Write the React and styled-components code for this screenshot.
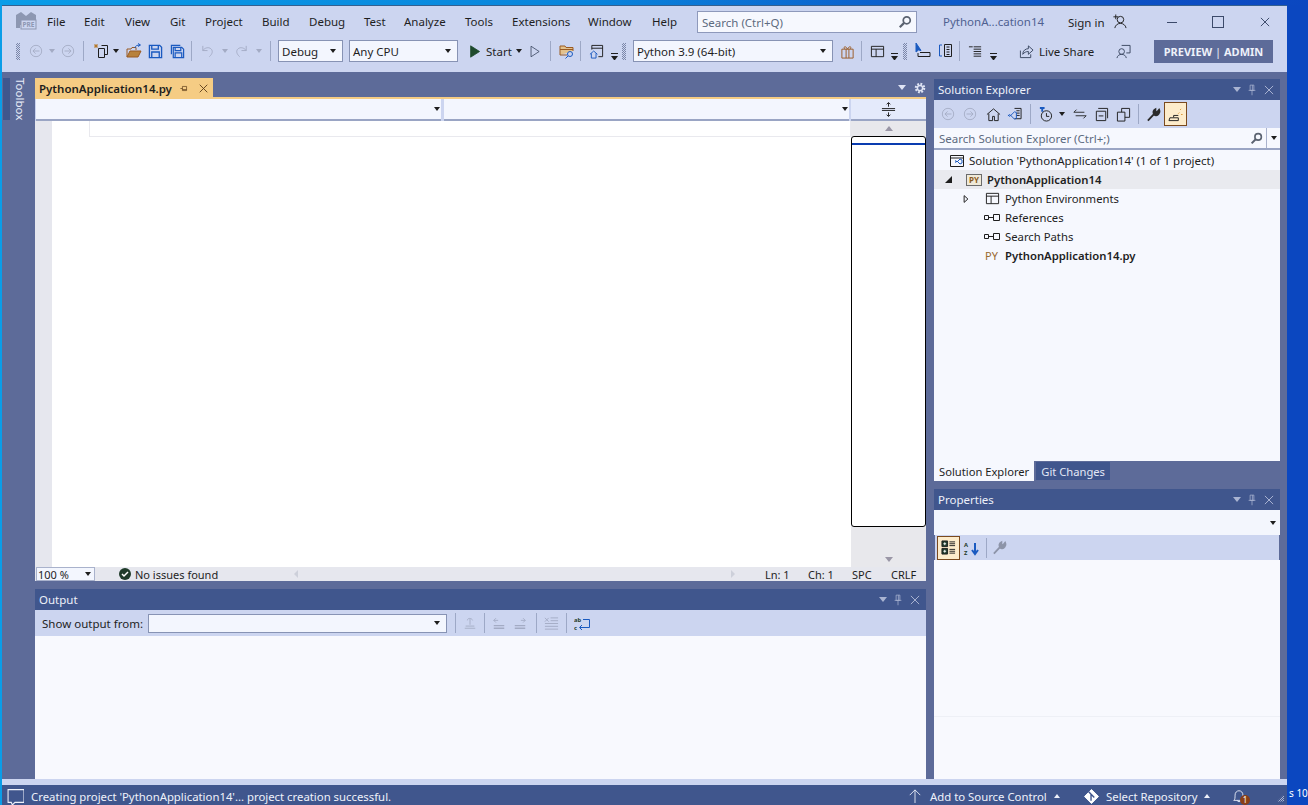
import React from "react";
import styled, { createGlobalStyle } from "styled-components";

const GlobalStyle = createGlobalStyle`
  html, body { margin: 0; padding: 0; background: #0b47c0; }
  * { box-sizing: border-box; }
  body { font-family: "Noto Sans", "Open Sans", sans-serif; font-size: 11.5px; color: #1e1e1e; }
`;

const GRAY = "#a3abc4";
const DARK = "#1e1e1e";
const BLUE = "#1a5ac0";
const BROWN = "#9a5a22";
const CHROME = "#ccd5f0";

const IconText = styled.text`
  font-family: "Noto Sans", sans-serif;
  font-size: 5.8px;
  font-weight: 700;
  fill: #1f3b2a;
  stroke: none;
`;

// 16x16 drawings, stroke colour comes from the Ico wrapper
const drawings = {
  back: <><circle cx="8" cy="8" r="6.5" /><path d="M12 8H4.5M7.5 5L4.5 8l3 3" /></>,
  forward: <><circle cx="8" cy="8" r="6.5" /><path d="M4 8h7.5M8.5 5l3 3-3 3" /></>,
  newProject: <><path d="M5.5 5.5h6v9h-6zM8.5 2.500h6v9h-3" /><path d="M3 1v4M1 3h4M1.500 1.500l3 3M4.500 1.500l-3 3" stroke="#b5792a" /></>,
  open: <><path d="M1 14V6h4l1-1.500h4V7" stroke={BROWN} /><path d="M1 14h11l3-6H4z" fill="#b8823c" stroke={BROWN} /><path d="M9 5c0-2 2-3 5-3M12 .5L14.500 2 12 3.500" stroke={BLUE} /></>,
  save: <g strokeWidth="1.400"><path d="M1.500 1.500h11l2 2v11h-13z" /><path d="M4 1.500v4h7v-4M4 14.500v-6h8v6" /></g>,
  saveAll: <g strokeWidth="1.300"><path d="M3.500 3.500h9l2 2v9h-11z" /><path d="M5.500 3.500v3.500h6V3.500M5.500 14.500V9.500h7v5M1.500 11V1.500H11" /></g>,
  undo: <path d="M3 2v5h5M3 7c2-3 6-4 8.500-2 2.500 2 2 5.500-1.500 8.500" />,
  redo: <path d="M13 2v5H8M13 7c-2-3-6-4-8.500-2C2 7 2.500 10.500 6 13.500" />,
  play: <path d="M2 1l11 7-11 7z" fill="#1e4a2c" stroke="#1e4a2c" />,
  hollow: <path d="M2.500 1.500l10 6.500-10 6.500z" />,
  folderSearch: <><path d="M1 12V3h5l1 1.500h7V8M1 12h7M1 6.500h13" stroke={BROWN} fill="#e3c28d" /><circle cx="11" cy="11" r="2.500" stroke={BLUE} /><path d="M9 13l-2.500 2.500" stroke={BLUE} /></>,
  homeWindow: <><path d="M3 1.500h11.500v12H10M3 1.500V6M3 4.500h11.500" /><path d="M1 11l4-3.500L9 11M2.500 10v5h5v-5" stroke={BLUE} /></>,
  gift: <path d="M2 5.500h12v9.500H2zM6.500 5.500V15M9.500 5.500V15M5 5.500C3.500 3 5.500 1 8 5.500 10.500 1 12.500 3 11 5.500" stroke={BROWN} />,
  layout: <path d="M1.500 2.500h13v11h-13zM1.500 5.500h13M6.500 5.500v8" />,
  select: <><path d="M1 0v9l2.500-2 2.500.5z" fill={BLUE} stroke={BLUE} /><path d="M5 9.500h10v4H3V10" /></>,
  dock: <><path d="M5 2H2.500v11H5" stroke={BLUE} /><path d="M7.500 1.500h7v12h-7zM9.500 4h3M9.500 6.500h3M9.500 9h3M9.500 11.500h3" /></>,
  indent: <path d="M1 3h4M6 3h8M6 5.500h8M6 8h8M6 10.500h8M6 13h8" />,
  share: <path d="M1.500 7v7.500h11V11M4 11c0-4 3-6 6-6V2l5 4.500L10 11V8c-2.500 0-4.500 1-6 3z" />,
  feedback: <><path d="M6 1.500h9v8H11" /><circle cx="6" cy="8" r="3" /><path d="M1 15c.5-2.500 2.500-4 5-4s4.500 1.500 5 4" /></>,
  person: <><path d="M4 .5v5M1.500 3h5" /><circle cx="9" cy="6" r="3.500" /><path d="M3 15c.5-3 3-5 6-5s5.500 2 6 5" /></>,
  magnifier: <><circle cx="10" cy="6" r="4" strokeWidth="2" /><path d="M7 9l-5 5" strokeWidth="2.500" /></>,
  home: <path d="M1 8l7-6 7 6M3 7v7.500h4V10h2v4.500h4V7" />,
  vsMap: <><path d="M8 1.500h7v11H8M10 4h3.500M10 6.500h3.500M10 9h3.500" /><path d="M1 9.500l2-1.500 5 5 2-1V6L8 5 3 10 1 8.500" stroke={BLUE} /></>,
  clock: <><circle cx="9" cy="9.500" r="5.500" /><path d="M9 6.500v3.500h3" /><path d="M2 1h5M4.500 1v4" stroke={BLUE} strokeWidth="2" /></>,
  sync: <path d="M1 6h12M4 3L1 6M3 10h12M12 13l3-3" />,
  collapse: <path d="M2.500 4.500h10v10h-10zM5 9.500h5M4.500 1.500h10V12" />,
  copies: <path d="M1.500 5.500h8v9.500h-8zM6 1.500h8.500V11H9.500M6 1.500v4" />,
  wrench: <path d="M2 14.500l7-7.500M10 2.500c-2 1-2.500 3-1.500 5s3.500 1.500 5-.5c1-1.500 1-3 .5-4L11.500 6 10 4.500z" fill="currentColor" strokeWidth="2" />,
  showAll: <><path d="M2 11.500h9v3H1zM6 11V9h5" /><path d="M12 6l-1 1M14 8h1.500M13 3l1-1" stroke="#d38a20" /></>,
  solution: <><path d="M1.500 2.500h13v11H1.500zM1.500 5h13" /><path d="M6 9.500l2-1.500 3 3 2-1V7l-2-1-3 3-2-1.500" stroke={BLUE} /></>,
  refs: <path d="M.5 5.500h4v4h-4zM4.500 7.500h5M9.500 4.500h6v6h-6z" />,
  closedArrow: <path d="M5.500 3.500l5 4.500-5 4.500z" strokeWidth="1.300" />,
  categorized: <><path d="M1 1h6v6H1zM1 9h6v6H1z" fill="#1f3b2a" /><path d="M9 2h6M9 4h6M9 6h6M9 10h6M9 12h6M9 14h6" /><path d="M2.500 4h3M4 2.500v3M2.500 12h3M4 10.500v3" stroke="#fff" /></>,
  sortAz: <><IconText x="1" y="6.500">A</IconText><IconText x="1" y="14.500">Z</IconText><path d="M12 3v11M9 10l3 4 3-4" stroke={BLUE} strokeWidth="2" /></>,
  findMsg: <><path d="M2 14h12M3 11.500h10" /><path d="M8 10V3M5 5c0-3 5-3 6 0" /></>,
  indentLeft: <><path d="M2 11h12M2 14h12" strokeWidth="1.500" /><path d="M7 5H2M4.500 2.500L2 5l2.500 2.500" /></>,
  indentRight: <><path d="M2 11h12M2 14h12" strokeWidth="1.500" /><path d="M9 5h5M11.500 2.500L14 5l-2.500 2.500" /></>,
  clearAll: <path d="M7 2h8M7 5h8M1 8h14M1 11h14M1 14h14M1 2l4 4M5 2L1 6" />,
  wrap: <><IconText x="0" y="6.500">ab</IconText><IconText x="0" y="14.500">c</IconText><path d="M9 4.500h6.500v8H6M8 10l-2.500 2.500L8 15" /></>,
  splitter: <path d="M1 7h14M1 9h14M8 5V1M6 2.500L8 .5l2 2M8 11v4M6 13.500l2 2 2-2" />,
  comment: <path d="M1 1.500h15v12H7.500L5 16l-1-2.500H1z" />,
  arrowUp: <path d="M8 16V1M2 7l6-6 6 6" />,
  git: <><path d="M8 .5L15.500 8 8 15.500.5 8z" fill="#fff" stroke="#fff" /><path d="M5 3l6 6M7.500 5.500v7" stroke="#40568d" strokeWidth="1.500" /></>,
  bell: <path d="M2 13c1.500-1 1.500-3 1.500-6 0-3 2-5 4.500-5s4.500 2 4.500 5c0 3 0 5 1.500 6zM6 13c0 2 4 2 4 0" />,
  pin: <path d="M5.500 1.500h5v7h-5zM3.500 8.500h9M8 8.500v6.500M8.500 1.500v7" />,
  pinH: <path d="M2 8h3M5 5v6h6V5zM5 9.500h6" />,
  close: <path d="M2.500 2.500l11 11M13.500 2.500l-11 11" strokeWidth="1.300" />,
  gear: <><circle cx="8" cy="8" r="5.500" strokeWidth="3" strokeDasharray="2.400 1.900" /><circle cx="8" cy="8" r="3.500" strokeWidth="2" /></>,
};

const IconSvg = styled.svg`
  flex: none;
  margin-left: ${(p) => p.$l}px;
  color: ${(p) => p.$color};
  stroke: ${(p) => p.$color};
  fill: none;
  stroke-width: 1;
`;

const Ico = ({ name, size = 16, color = DARK, l = 0 }) => (
  <IconSvg viewBox="0 0 16 16" width={size} height={size} $color={color} $l={l}>
    {drawings[name]}
  </IconSvg>
);

const Desktop = styled.div`
  width: 1308px;
  height: 805px;
  display: flex;
  flex-direction: column;
  overflow: hidden;
  background: #0b47c0;
`;
const TopStrip = styled.div`
  height: 5px;
  flex: none;
  background: linear-gradient(90deg, #0a9de8 0%, #0a85dc 45%, #0b5ccb 70%, #0b47c0 100%);
`;
const DesktopRow = styled.div`
  flex: 1;
  display: flex;
  min-height: 0;
  background: linear-gradient(90deg, #0a9de8 0, #0a9de8 2px, #0b47c0 2px);
`;
const WindowFrame = styled.div`
  width: 1285px;
  flex: none;
  margin-left: 2px;
  display: flex;
  flex-direction: column;
  background: ${CHROME};
  border-top: 1px solid #35608f;
`;
const Clock = styled.div`
  flex: 1;
  align-self: flex-end;
  color: #fff;
  font-size: 10px;
  line-height: 16px;
  margin-bottom: 4px;
  padding-left: 2px;
  white-space: nowrap;
`;

const MenuRow = styled.div`
  height: 30px;
  display: flex;
  align-items: center;
  flex: none;
  padding-left: 13px;
`;
const Logo = styled.svg`
  width: 22px;
  height: 20px;
  flex: none;
  margin-right: 10px;
`;
const LogoText = styled.text`
  font-family: "Noto Sans", sans-serif;
  font-size: 6.5px;
  font-weight: 700;
  fill: #8d97b2;
`;
const MenuList = styled.nav`
  display: flex;
  width: 650px;
`;
const MenuItem = styled.span`
  width: ${(p) => p.$w}px;
  font-size: 11.5px;
  color: #1e1e1e;
`;
const SearchBox = styled.div`
  width: 220px;
  height: 22px;
  margin-top: 2px;
  display: flex;
  align-items: center;
  justify-content: space-between;
  padding: 0 4px;
  background: #f6f8fe;
  border: 1px solid #8e99bb;
  color: #5d6b80;
`;
const WindowTitle = styled.span`
  margin-left: 26px;
  width: 125px;
  color: #4f6191;
  font-size: 11.5px;
`;
const SignIn = styled.span`
  width: 44px;
  font-size: 11.5px;
  margin-top: 2px;
`;
const WindowButtons = styled.div`
  display: flex;
  align-items: center;
  gap: 30px;
  margin-left: 37px;
  margin-top: 2px;
`;
const WinMin = styled.span`
  width: 16px;
  height: 12px;
  display: flex;
  align-items: center;
  &::before {
    content: "";
    width: 10px;
    height: 1px;
    margin-left: 3px;
    background: #3c4a6a;
  }
`;
const WinMax = styled.span`
  width: 16px;
  height: 12px;
  display: flex;
  justify-content: center;
  &::before {
    content: "";
    width: 10px;
    height: 10px;
    border: 1px solid #3c4a6a;
  }
`;

const ToolRow = styled.div`
  height: ${(p) => p.$h || 36}px;
  flex: none;
  display: flex;
  align-items: center;
  padding-bottom: ${(p) => p.$pb || 0}px;
  background: ${CHROME};
`;
const Grip = styled.span`
  width: 4px;
  height: 17px;
  flex: none;
  margin-left: ${(p) => p.$l}px;
  background: repeating-conic-gradient(#7b86a8 0 25%, transparent 0 50%) 0 0 / 2px 2px;
`;
const Sep = styled.span`
  width: 1px;
  height: 20px;
  flex: none;
  margin-left: ${(p) => p.$l}px;
  background: #9da8c6;
`;
const Caret = styled.span`
  flex: none;
  margin-left: ${(p) => p.$l || 0}px;
  width: 0;
  height: 0;
  border-left: ${(p) => p.$s || 3.5}px solid transparent;
  border-right: ${(p) => p.$s || 3.5}px solid transparent;
  border-${(p) => (p.$up ? "bottom" : "top")}: ${(p) => (p.$s ? p.$s + 0.5 : 4)}px solid ${(p) => p.$color || DARK};
`;
const Overflow = styled.span`
  flex: none;
  margin-left: ${(p) => p.$l}px;
  margin-top: 9px;
  width: 7px;
  height: 6px;
  border-top: 1px solid #1e1e1e;
  &::after {
    content: "";
    display: block;
    margin-top: 2px;
    border-left: 3.5px solid transparent;
    border-right: 3.5px solid transparent;
    border-top: 4px solid #1e1e1e;
  }
`;
const Combo = styled.div`
  flex: none;
  width: ${(p) => p.$w}px;
  height: ${(p) => p.$h || 22}px;
  margin-left: ${(p) => p.$l || 0}px;
  display: flex;
  align-items: center;
  justify-content: space-between;
  padding: 0 6px 0 3px;
  background: #f3f6fe;
  border: 1px solid #8793b4;
  font-size: 11.5px;
`;
const LabelText = styled.span`
  flex: none;
  width: ${(p) => p.$w}px;
  margin-left: ${(p) => p.$l}px;
  white-space: nowrap;
`;
const PreviewBadge = styled.div`
  margin-left: 23px;
  width: 119px;
  height: 23px;
  display: flex;
  align-items: center;
  justify-content: center;
  background: #5d6b99;
  color: #eef1fa;
  font-size: 11px;
  font-weight: 700;
  white-space: pre;
`;
const ThinBar = styled.span`
  font-weight: 400;
`;

const Workspace = styled.div`
  flex: 1;
  min-height: 0;
  display: flex;
  background: #5d6b99;
`;
const ToolboxRail = styled.div`
  width: 33px;
  flex: none;
  padding-top: 6px;
  display: flex;
  align-items: flex-start;
`;
const ToolboxTab = styled.div`
  width: 7px;
  height: 42px;
  margin-left: 1px;
  background: #40568d;
`;
const ToolboxLabel = styled.span`
  writing-mode: vertical-rl;
  margin-left: 3px;
  color: #e8ecf8;
  font-size: 11.5px;
  line-height: 14px;
`;
const CenterColumn = styled.div`
  width: 891px;
  flex: none;
  padding-top: 6px;
  display: flex;
  flex-direction: column;
`;
const TabStrip = styled.div`
  height: 19px;
  flex: none;
  display: flex;
  align-items: center;
`;
const DocTab = styled.div`
  width: 178px;
  height: 19px;
  display: flex;
  align-items: center;
  padding: 1px 0 0 4px;
  background: #f5cc84;
  font-weight: 600;
  font-size: 11.5px;
`;
const DocName = styled.span`
  width: 140px;
  white-space: nowrap;
`;
const TabActions = styled.div`
  margin-left: auto;
  display: flex;
  align-items: center;
  gap: 8px;
`;
const NavBar = styled.div`
  height: 24px;
  flex: none;
  display: flex;
  border-top: 2px solid #f5cc84;
  background: ${CHROME};
`;
const NavCombo = styled.div`
  flex: none;
  width: ${(p) => p.$w}px;
  margin-left: 1px;
  margin-right: 2px;
  display: flex;
  align-items: center;
  justify-content: flex-end;
  padding-right: 1px;
  background: #f3f6fe;
  border-bottom: 2px solid #9aa5c4;
`;
const SplitButton = styled.div`
  flex: 1;
  display: flex;
  align-items: center;
  justify-content: center;
  background: #e4eafb;
  border-bottom: 2px solid #9aa5c4;
`;
const EditorBody = styled.div`
  flex: 1;
  min-height: 0;
  display: flex;
  background: #fff;
`;
const Gutter = styled.div`
  width: 17px;
  flex: none;
  background: #e6e7ee;
`;
const TextArea = styled.div`
  flex: 1;
`;
const CurrentLine = styled.div`
  height: 16px;
  margin-left: 37px;
  border: 1px solid #e9e9ee;
  border-top: 0;
`;
const MapColumn = styled.div`
  width: 75px;
  flex: none;
  display: flex;
  flex-direction: column;
  align-items: center;
  background: #e8e8ec;
`;
const MapArrow = styled.div`
  height: ${(p) => p.$h}px;
  margin-top: ${(p) => p.$top || 0}px;
  display: flex;
  align-items: center;
`;
const MapBox = styled.div`
  width: 75px;
  height: 391px;
  flex: none;
  padding-top: 6px;
  background: #fff;
  border: 1px solid #000;
  border-radius: 3px;
  &::before {
    content: "";
    display: block;
    height: 2px;
    background: #0a3cb0;
  }
`;
const EditorStatus = styled.div`
  height: 14px;
  flex: none;
  display: flex;
  align-items: center;
  background: #e6e7ee;
  font-size: 11px;
`;
const ZoomCombo = styled.div`
  width: 59px;
  height: 14px;
  margin-left: 1px;
  flex: none;
  display: flex;
  align-items: center;
  justify-content: space-between;
  padding: 0 3px 0 1px;
  background: #f3f6fe;
  border: 1px solid #a9b2cc;
`;
const IssueDot = styled.svg`
  width: 12px;
  height: 12px;
  flex: none;
  margin-left: 24px;
`;
const SideArrow = styled.span`
  flex: none;
  margin-left: ${(p) => p.$l}px;
  width: 0;
  height: 0;
  border-top: 4px solid transparent;
  border-bottom: 4px solid transparent;
  border-${(p) => (p.$left ? "right" : "left")}: 4px solid #cdd0da;
`;
const OutputPane = styled.div`
  height: 190px;
  flex: none;
  margin-top: 8px;
  display: flex;
  flex-direction: column;
`;
const PaneTitle = styled.div`
  height: 21px;
  flex: none;
  display: flex;
  align-items: center;
  justify-content: space-between;
  padding: 0 5px 0 4px;
  background: #40568d;
  color: #eef1fa;
  font-size: 11.5px;
`;
const PaneActions = styled.div`
  display: flex;
  align-items: center;
  gap: 5px;
`;
const PaneBody = styled.div`
  flex: 1;
  min-height: 0;
  background: #f8f9fe;
`;
const RightColumn = styled.div`
  width: 346px;
  flex: none;
  margin-left: 8px;
  padding-top: 7px;
  display: flex;
  flex-direction: column;
`;
const ExplorerPane = styled.div`
  height: 402px;
  flex: none;
  display: flex;
  flex-direction: column;
`;
const SearchRow = styled.div`
  height: 22px;
  flex: none;
  display: flex;
  align-items: center;
  padding-left: 5px;
  background: #f6f8fe;
  border-bottom: 2px solid #9aa5c4;
  color: #5d6b80;
`;
const SearchGlass = styled.span`
  display: flex;
  margin-left: auto;
`;
const SearchMenu = styled.div`
  margin-left: 3px;
  width: 14px;
  height: 100%;
  display: flex;
  align-items: center;
  justify-content: center;
  border-left: 1px solid #a9b2cc;
`;
const Tree = styled.div`
  flex: 1;
  min-height: 0;
  padding-top: 1px;
  background: #f6f8fe;
`;
const TreeRow = styled.div`
  height: 19px;
  display: flex;
  align-items: center;
  padding-left: ${(p) => p.$indent}px;
  background: ${(p) => (p.$selected ? "#e9eaef" : "transparent")};
  font-size: ${(p) => p.$size || 11.3}px;
  font-weight: ${(p) => (p.$bold ? 600 : 400)};
`;
const OpenArrow = styled.span`
  width: 0;
  height: 0;
  flex: none;
  border-bottom: 7px solid #1e1e1e;
  border-left: 7px solid transparent;
`;
const PyChip = styled.span`
  width: 16px;
  height: 12px;
  flex: none;
  margin-left: ${(p) => p.$l}px;
  margin-right: 5px;
  display: flex;
  align-items: center;
  justify-content: center;
  border: 1px solid #6b6b6b;
  background: #efe9d8;
  color: #8a5a1c;
  font-size: 8px;
  font-weight: 700;
`;
const PyMark = styled.span`
  width: 20px;
  flex: none;
  color: #9a6a30;
  font-size: 11px;
  font-weight: 400;
`;
const TreeIconGap = styled.span`
  display: flex;
  flex: none;
  margin-right: ${(p) => p.$r}px;
  margin-left: ${(p) => p.$l || 0}px;
`;
const BottomTabs = styled.div`
  height: 20px;
  flex: none;
  display: flex;
  align-items: flex-start;
  gap: 2px;
`;
const BottomTab = styled.div`
  height: ${(p) => (p.$active ? 20 : 18)}px;
  margin-top: ${(p) => (p.$active ? 0 : 1)}px;
  padding: 0 5px;
  display: flex;
  align-items: center;
  background: ${(p) => (p.$active ? "#f6f8fe" : "#40568d")};
  color: ${(p) => (p.$active ? "#1e1e1e" : "#e3e8f6")};
  font-size: 11.2px;
`;
const PropertiesPane = styled.div`
  height: 290px;
  flex: none;
  margin-top: 8px;
  display: flex;
  flex-direction: column;
`;
const PropCombo = styled.div`
  height: 25px;
  flex: none;
  display: flex;
  align-items: center;
  justify-content: flex-end;
  padding-right: 4px;
  background: #f3f6fd;
`;
const PropToolbar = styled.div`
  height: 25px;
  flex: none;
  display: flex;
  align-items: center;
  margin: 0 1px;
  padding-left: 2px;
  background: ${CHROME};
`;
const ActiveTool = styled.span`
  width: 23px;
  height: 24px;
  flex: none;
  display: flex;
  align-items: center;
  justify-content: center;
  margin-left: ${(p) => p.$l || 0}px;
  background: #fdeccb;
  border: 1px solid #7a4a1e;
`;
const PropList = styled.div`
  flex: 1;
  background: linear-gradient(#f8f9fe 156px, #eef0f6 156px, #eef0f6 157px, #f8f9fe 157px);
`;
const StatusBar = styled.footer`
  height: 20px;
  flex: none;
  margin-top: 6px;
  padding-top: 2px;
  display: flex;
  align-items: center;
  background: #40568d;
  color: #eef1fa;
  font-size: 11.35px;
`;
const StatusText = styled.span`
  flex: none;
  width: ${(p) => p.$w}px;
  margin-left: ${(p) => p.$l}px;
  white-space: nowrap;
`;
const BellWrap = styled.span`
  position: relative;
  margin-left: 22px;
  display: flex;
  flex: none;
`;
const BellBadge = styled.span`
  position: absolute;
  left: 8px;
  top: 6px;
  width: 10px;
  height: 10px;
  border-radius: 50%;
  background: #8a3f17;
  color: #fff;
  font-size: 8px;
  line-height: 10px;
  text-align: center;
`;
const ResizeGrip = styled.span`
  flex: none;
  margin-left: 31px;
  margin-top: 4px;
  width: 7px;
  height: 7px;
  background: repeating-conic-gradient(#aab4d2 0 25%, transparent 0 50%) 0 0 / 2px 2px;
  clip-path: polygon(100% 0, 100% 100%, 0 100%);
`;

const menus = [
  ["File", 37], ["Edit", 41], ["View", 45], ["Git", 35], ["Project", 57], ["Build", 47], ["Debug", 55],
  ["Test", 40], ["Analyze", 61], ["Tools", 47], ["Extensions", 76], ["Window", 64], ["Help", 45],
];

const PaneButtons = ({ color = "#aab4d2" }) => (
  <PaneActions>
    <Caret $s={4.5} $color={color} />
    <Ico name="pin" size={12} color={color} l={0} />
    <Ico name="close" size={12} color={color} />
  </PaneActions>
);

const App = () => (
  <>
    <GlobalStyle />
    <Desktop>
      <TopStrip />
      <DesktopRow>
        <WindowFrame>
          <MenuRow>
            <Logo viewBox="0 0 22 20">
              <path d="M1 17V4l5-3 5 4 5-4 5 3v13H10v-3H5v3z" fill="#8d97b2" />
              <rect x="6" y="9" width="15" height="9" fill={CHROME} stroke="#8d97b2" />
              <LogoText x="7.500" y="16">PRE</LogoText>
            </Logo>
            <MenuList>
              {menus.map(([label, w]) => (
                <MenuItem key={label} $w={w}>{label}</MenuItem>
              ))}
            </MenuList>
            <SearchBox>
              Search (Ctrl+Q)
              <Ico name="magnifier" size={14} color="#5a6270" />
            </SearchBox>
            <WindowTitle>PythonA...cation14</WindowTitle>
            <SignIn>Sign in</SignIn>
            <Ico name="person" size={15} />
            <WindowButtons>
              <WinMin />
              <WinMax />
              <Ico name="close" size={12} color="#3c4a6a" l={3} />
            </WindowButtons>
          </MenuRow>

          <ToolRow $pb={6}>
            <Grip $l={14} />
            <Ico name="back" size={14} color={GRAY} l={9} />
            <Caret $l={6} $color={GRAY} />
            <Ico name="forward" size={14} color={GRAY} l={6} />
            <Sep $l={8} />
            <Ico name="newProject" l={9} />
            <Caret $l={4} />
            <Ico name="open" l={7} />
            <Ico name="save" size={15} color={BLUE} l={6} />
            <Ico name="saveAll" size={15} color={BLUE} l={7} />
            <Sep $l={6} />
            <Ico name="undo" size={15} color={GRAY} l={8} />
            <Caret $l={7} $color={GRAY} />
            <Ico name="redo" size={15} color={GRAY} l={6} />
            <Caret $l={7} $color={GRAY} />
            <Sep $l={8} />
            <Combo $w={65} $l={7}>Debug<Caret /></Combo>
            <Combo $w={109} $l={6}>Any CPU<Caret /></Combo>
            <Ico name="play" size={13} l={11} />
            <LabelText $w={30} $l={4}>Start</LabelText>
            <Caret $l={0} />
            <Ico name="hollow" size={13} color="#3a4660" l={7} />
            <Sep $l={8} />
            <Ico name="folderSearch" l={8} />
            <Sep $l={5} />
            <Ico name="homeWindow" size={15} l={8} />
            <Overflow $l={7} />
            <Grip $l={4} />
            <Combo $w={200} $l={7}>Python 3.9 (64-bit)<Caret /></Combo>
            <Ico name="gift" size={15} l={7} />
            <Sep $l={6} />
            <Ico name="layout" size={15} l={8} />
            <Overflow $l={6} />
            <Grip $l={5} />
            <Ico name="select" l={8} />
            <Ico name="dock" l={6} />
            <Sep $l={6} />
            <Ico name="indent" size={15} l={8} />
            <Overflow $l={7} />
            <Ico name="share" size={15} color="#3a4660" l={22} />
            <LabelText $w={57} $l={5}>Live Share</LabelText>
            <Ico name="feedback" size={15} color="#3a4660" l={20} />
            <PreviewBadge>PREVIEW <ThinBar>|</ThinBar> ADMIN</PreviewBadge>
          </ToolRow>

          <Workspace>
            <ToolboxRail>
              <ToolboxTab />
              <ToolboxLabel>Toolbox</ToolboxLabel>
            </ToolboxRail>

            <CenterColumn>
              <TabStrip>
                <DocTab>
                  <DocName>PythonApplication14.py</DocName>
                  <Ico name="pinH" size={11} color="#5a3a18" />
                  <Ico name="close" size={11} color="#5a3a18" l={8} />
                </DocTab>
                <TabActions>
                  <Caret $s={4.5} $color="#dfe4f4" />
                  <Ico name="gear" size={12} color="#dfe4f4" />
                </TabActions>
              </TabStrip>
              <NavBar>
                <NavCombo $w={405}><Caret /></NavCombo>
                <NavCombo $w={405}><Caret /></NavCombo>
                <SplitButton><Ico name="splitter" size={15} /></SplitButton>
              </NavBar>
              <EditorBody>
                <Gutter />
                <TextArea><CurrentLine /></TextArea>
                <MapColumn>
                  <MapArrow $h={15}><Caret $up $s={4.5} $color="#9a96a6" /></MapArrow>
                  <MapBox />
                  <MapArrow $h={8} $top={28}><Caret $s={4.5} $color="#9a96a6" /></MapArrow>
                </MapColumn>
              </EditorBody>
              <EditorStatus>
                <ZoomCombo>100 %<Caret /></ZoomCombo>
                <IssueDot viewBox="0 0 12 12">
                  <circle cx="6" cy="6" r="6" fill="#1f3b2a" />
                  <path d="M3 6l2 2 4-4" fill="none" stroke="#fff" strokeWidth="1.500" />
                </IssueDot>
                <LabelText $w={85} $l={4}>No issues found</LabelText>
                <SideArrow $left $l={74} />
                <SideArrow $l={433} />
                <LabelText $w={43} $l={30}>Ln: 1</LabelText>
                <LabelText $w={44} $l={0}>Ch: 1</LabelText>
                <LabelText $w={39} $l={0}>SPC</LabelText>
                <LabelText $w={30} $l={0}>CRLF</LabelText>
              </EditorStatus>
              <OutputPane>
                <PaneTitle>
                  Output
                  <PaneButtons />
                </PaneTitle>
                <ToolRow $h={26}>
                  <LabelText $w={106} $l={7}>Show output from:</LabelText>
                  <Combo $w={299} $h={19}><span /><Caret /></Combo>
                  <Sep $l={8} />
                  <Ico name="findMsg" size={14} color={GRAY} l={7} />
                  <Sep $l={7} />
                  <Ico name="indentLeft" size={14} color={GRAY} l={7} />
                  <Ico name="indentRight" size={14} color={GRAY} l={7} />
                  <Sep $l={9} />
                  <Ico name="clearAll" size={15} color={GRAY} l={7} />
                  <Sep $l={7} />
                  <Ico name="wrap" size={16} color={BLUE} l={7} />
                </ToolRow>
                <PaneBody />
              </OutputPane>
            </CenterColumn>

            <RightColumn>
              <ExplorerPane>
                <PaneTitle>
                  Solution Explorer
                  <PaneButtons />
                </PaneTitle>
                <ToolRow $h={28}>
                  <Ico name="back" size={14} color={GRAY} l={7} />
                  <Ico name="forward" size={14} color={GRAY} l={8} />
                  <Ico name="home" size={15} l={9} />
                  <Ico name="vsMap" size={15} l={6} />
                  <Sep $l={8} />
                  <Ico name="clock" size={15} l={7} />
                  <Caret $l={6} />
                  <Ico name="sync" size={14} l={8} />
                  <Ico name="collapse" size={15} l={7} />
                  <Ico name="copies" size={15} l={7} />
                  <Sep $l={7} />
                  <Ico name="wrench" size={15} color="#2b2b2b" l={7} />
                  <ActiveTool $l={3}><Ico name="showAll" size={15} /></ActiveTool>
                </ToolRow>
                <SearchRow>
                  Search Solution Explorer (Ctrl+;)
                  <SearchGlass><Ico name="magnifier" size={13} color="#5a6270" /></SearchGlass>
                  <SearchMenu><Caret /></SearchMenu>
                </SearchRow>
                <Tree>
                  <TreeRow $indent={15} $size={11.5}>
                    <TreeIconGap $r={4}><Ico name="solution" size={16} /></TreeIconGap>
                    Solution 'PythonApplication14' (1 of 1 project)
                  </TreeRow>
                  <TreeRow $indent={11} $selected $bold>
                    <OpenArrow />
                    <PyChip $l={14}>PY</PyChip>
                    PythonApplication14
                  </TreeRow>
                  <TreeRow $indent={26}>
                    <Ico name="closedArrow" size={12} />
                    <TreeIconGap $l={13} $r={5}><Ico name="layout" size={15} /></TreeIconGap>
                    Python Environments
                  </TreeRow>
                  <TreeRow $indent={50}>
                    <TreeIconGap $r={5}><Ico name="refs" size={16} /></TreeIconGap>
                    References
                  </TreeRow>
                  <TreeRow $indent={50}>
                    <TreeIconGap $r={5}><Ico name="refs" size={16} /></TreeIconGap>
                    Search Paths
                  </TreeRow>
                  <TreeRow $indent={51} $bold>
                    <PyMark>PY</PyMark>
                    PythonApplication14.py
                  </TreeRow>
                </Tree>
                <BottomTabs>
                  <BottomTab $active>Solution Explorer</BottomTab>
                  <BottomTab>Git Changes</BottomTab>
                </BottomTabs>
              </ExplorerPane>
              <PropertiesPane>
                <PaneTitle>
                  Properties
                  <PaneButtons />
                </PaneTitle>
                <PropCombo><Caret /></PropCombo>
                <PropToolbar>
                  <ActiveTool><Ico name="categorized" size={15} /></ActiveTool>
                  <Ico name="sortAz" size={16} l={3} />
                  <Sep $l={7} />
                  <Ico name="wrench" size={15} color="#8d94a8" l={5} />
                </PropToolbar>
                <PropList />
              </PropertiesPane>
            </RightColumn>
          </Workspace>

          <StatusBar>
            <Ico name="comment" size={17} color="#eef1fa" l={5} />
            <StatusText $w={871} $l={7}>Creating project 'PythonApplication14'... project creation successful.</StatusText>
            <Ico name="arrowUp" size={14} color="#eef1fa" l={6} />
            <StatusText $w={124} $l={8}>Add to Source Control</StatusText>
            <Caret $up $color="#eef1fa" />
            <Ico name="git" size={15} l={24} />
            <StatusText $w={98} $l={7}>Select Repository</StatusText>
            <Caret $up $color="#eef1fa" />
            <BellWrap>
              <Ico name="bell" size={14} color="#eef1fa" />
              <BellBadge>1</BellBadge>
            </BellWrap>
            <ResizeGrip />
          </StatusBar>
        </WindowFrame>
        <Clock>s 10</Clock>
      </DesktopRow>
    </Desktop>
  </>
);

export default App;
